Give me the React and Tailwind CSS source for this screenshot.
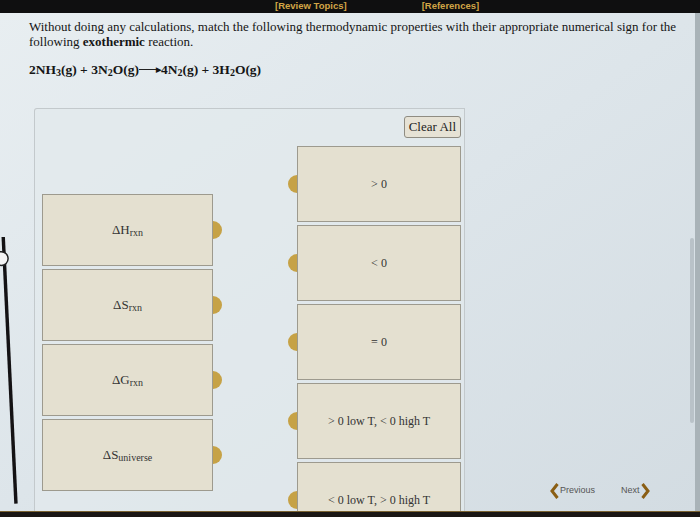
import React from "react";

const serif = { fontFamily: '"Liberation Serif", "Times New Roman", serif' };
const sans = { fontFamily: '"Liberation Sans", Arial, sans-serif' };

const Tab = ({ side }) => (
  <div
    className={
      side === "right"
        ? "w-[9px] h-[18px] rounded-r-full bg-[#c6a246]"
        : "w-[9px] h-[18px] rounded-l-full bg-[#c6a246]"
    }
  />
);

const Sub = ({ children }) => (
  <sub className="text-[10px] relative top-[2px]">{children}</sub>
);

const leftItems = [
  { sym: "H", sub: "rxn" },
  { sym: "S", sub: "rxn" },
  { sym: "G", sub: "rxn" },
  { sym: "S", sub: "universe" },
];

const rightItems = [
  "> 0",
  "< 0",
  "= 0",
  "> 0 low T, < 0 high T",
  "< 0 low T, > 0 high T",
];

const App = () => {
  return (
    <div
      className="w-[700px] h-[517px] overflow-hidden flex flex-col bg-[#dbe3e8] text-[#151515]"
      style={serif}
    >
      {/* top bar */}
      <div className="h-[13px] shrink-0 bg-[#0f0f10] flex items-center text-[9.5px] font-bold text-[#d2a546]" style={sans}>
        <span className="ml-[275px]">[Review Topics]</span>
        <span className="ml-[75px]">[References]</span>
      </div>

      <div className="flex-1 flex min-h-0 bg-gradient-to-br from-[#e8eef1] via-[#dde5ea] to-[#d3dce2]">
        {/* left gutter with bezel line */}
        <div className="w-[29px] shrink-0 flex flex-col">
          <div className="h-[228px]" />
          <svg width="29" height="280" viewBox="0 0 29 280">
            <line x1="3" y1="0" x2="16" y2="272" stroke="#141214" strokeWidth="3.5" />
            <circle cx="1" cy="22" r="7" fill="#f4f4f4" stroke="#222" strokeWidth="1.5" />
          </svg>
        </div>

        <div className="flex-1 flex flex-col min-w-0">
          <div className="pt-[6px] text-[13px] leading-[15px]">
            <p>
              Without doing any calculations, match the following thermodynamic properties with their appropriate numerical sign for the
              <br />
              following <b>exothermic</b> reaction.
            </p>
            <p className="mt-[13px] font-bold text-[13.5px] flex items-baseline">
              <span>
                2NH<Sub>3</Sub>(g) + 3N<Sub>2</Sub>O(g)
              </span>
              <span className="inline-block w-[19px] h-[1px] bg-[#222] relative -top-[4px]" />
              <span className="text-[7px] relative -top-[2px] -ml-[2px]">▶</span>
              <span>
                4N<Sub>2</Sub>(g) + 3H<Sub>2</Sub>O(g)
              </span>
            </p>
          </div>

          <div className="flex-1 flex min-h-0 mt-[28px]">
            {/* drag panel */}
            <div className="ml-[5px] w-[431px] shrink-0 border border-[#c3c9cc] border-b-0 rounded-tl-[3px] bg-[#e3e9ec]/70 flex pt-[7px] pl-[7px] pr-[3px] overflow-hidden">
              <div className="flex flex-col gap-[3px] pt-[78px]">
                {leftItems.map((it, i) => (
                  <div key={i} className="flex items-center">
                    <div className="w-[171px] h-[72px] border border-[#9d9a8e] bg-[#e4e0d0] flex items-center justify-center text-[13px] text-[#333]">
                      <span>
                        &Delta;{it.sym}
                        <Sub>{it.sub}</Sub>
                      </span>
                    </div>
                    <Tab side="right" />
                  </div>
                ))}
              </div>

              <div className="flex-1" />

              <div className="flex flex-col items-end">
                <button className="h-[25px] px-[4px] border border-[#8f8c82] rounded-[3px] bg-[#e6e2d5] text-[13px] text-[#222] mb-[8px]">
                  Clear All
                </button>
                {rightItems.map((t, i) => (
                  <div key={i} className="flex items-center mb-[3px]">
                    <Tab side="left" />
                    <div className="w-[164px] h-[76px] border border-[#9d9a8e] bg-[#e4e0d0] flex items-center justify-center text-[12px] text-[#333]">
                      {t}
                    </div>
                  </div>
                ))}
              </div>
            </div>

            {/* right area with navigation */}
            <div className="flex-1 flex flex-col justify-end pb-[12px]">
              <div className="flex items-center pl-[85px] text-[9px] text-[#555]" style={sans}>
                <svg width="9" height="16" viewBox="0 0 9 16">
                  <path d="M7.5 1 L2 8 L7.5 15" fill="none" stroke="#8a5e14" strokeWidth="3" />
                </svg>
                <span className="ml-[1px]">Previous</span>
                <span className="ml-[26px]">Next</span>
                <svg width="9" height="16" viewBox="0 0 9 16" className="ml-[1px]">
                  <path d="M1.5 1 L7 8 L1.5 15" fill="none" stroke="#8a5e14" strokeWidth="3" />
                </svg>
              </div>
            </div>
          </div>
        </div>

        {/* right edge / scrollbar */}
        <div className="w-[10px] shrink-0 flex">
          <div className="w-[5px] flex flex-col">
            <div className="h-[225px]" />
            <div className="h-[185px] w-[4px] rounded-full bg-[#b9c2c8]" />
          </div>
          <div className="w-[5px] bg-[#a9b3b8]" />
        </div>
      </div>

      <div className="h-[6px] shrink-0 bg-[#1a1614] border-t border-[#7a6230]" />
    </div>
  );
};

export default App;
